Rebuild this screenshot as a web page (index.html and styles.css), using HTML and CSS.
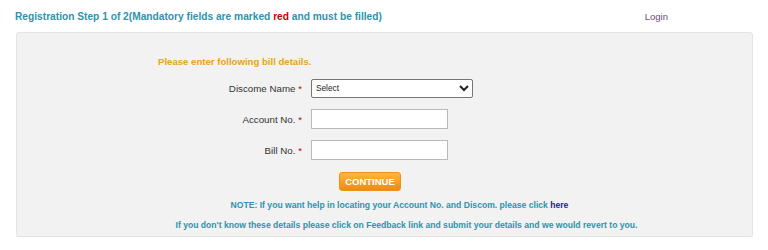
FILE: index.html
```html
<!DOCTYPE html>
<html lang="en">
<head>
  <meta charset="UTF-8" />
  <title>Registration Step 1</title>
  <link rel="stylesheet" href="styles.css">
</head>
<body>

  <div class="topbar">
    <h1>Registration Step 1 of 2(Mandatory fields are marked <span class="red">red</span> and must be filled)</h1>
    <a class="login" href="#">Login</a>
  </div>

  <div class="panel">
    <div class="form">
      <p class="intro">Please enter following bill details.</p>

      <label for="discom">Discome Name <span class="star">*</span></label>
      <select id="discom">
        <option>Select</option>
      </select>

      <label for="account">Account No. <span class="star">*</span></label>
      <input id="account" type="text" />

      <label for="bill">Bill No. <span class="star">*</span></label>
      <input id="bill" type="text" />

      <div class="actions">
        <button type="button">CONTINUE</button>
      </div>
    </div>

    <p class="note">NOTE: If you want help in locating your Account No. and Discom. please click <a href="#">here</a></p>
    <p class="note feedback">If you don't know these details please click on Feedback link and submit your details and we would revert to you.</p>
  </div>

</body>
</html>
```

FILE: styles.css
```css
body {
  font-family: "Liberation Sans", Arial, sans-serif;
  background-color: #fff;
  margin: 0;
  color: #333;
}
.topbar {
  display: flex;
  justify-content: space-between;
  align-items: center;
  height: 32px;
  padding: 0 100px 0 15px;
}
.topbar h1 {
  margin: 0;
  font-size: 10.2px;
  font-weight: bold;
  color: #2f93ad;
}
.red {
  color: #cc0000;
}
.login {
  font-size: 9.5px;
  color: #6a4b78;
  text-decoration: none;
}
.panel {
  width: 735px;
  margin-left: 16px;
  padding: 23px 0 6px;
  background-color: #f2f2f2;
  border: 1px solid #e4e4e4;
  border-radius: 3px;
  box-shadow: 0 1px 1px rgba(0,0,0,0.06);
}
.form {
  display: grid;
  grid-template-columns: 144px auto;
  column-gap: 9px;
  row-gap: 11px;
  align-items: center;
  margin-left: 141px;
}
.intro {
  grid-column: 1 / 3;
  margin: 0 0 1px;
  font-size: 9.6px;
  font-weight: bold;
  color: #e9a21c;
}
label {
  text-align: right;
  font-size: 9.75px;
  color: #333;
}
.star {
  color: #cc0000;
}
select {
  width: 162px;
  height: 19px;
  font-family: "Liberation Sans", Arial, sans-serif;
  font-size: 8.25px;
  color: #222;
  border: 1px solid #767676;
  border-radius: 2px;
  background-color: #fff;
}
input {
  width: 131px;
  height: 16px;
  border: 1px solid #b9b9b9;
  background-color: #fff;
  margin: 0;
}
.actions {
  grid-column: 2;
  padding-left: 28px;
}
button {
  width: 62px;
  height: 19px;
  padding: 0;
  font-family: "Liberation Sans", Arial, sans-serif;
  font-size: 9.5px;
  font-weight: bold;
  color: #fff;
  background: linear-gradient(#fbb63e, #ef8b12);
  border: 1px solid #e99318;
  border-radius: 3px;
  cursor: pointer;
}
.note {
  margin: 9px 0 0;
  padding-left: 30px;
  text-align: center;
  font-size: 8.6px;
  font-weight: bold;
  color: #2f93ad;
}
.note a {
  color: #1d1d8e;
  text-decoration: none;
}
.feedback {
  margin-top: 10px;
  padding-left: 44px;
}
```
